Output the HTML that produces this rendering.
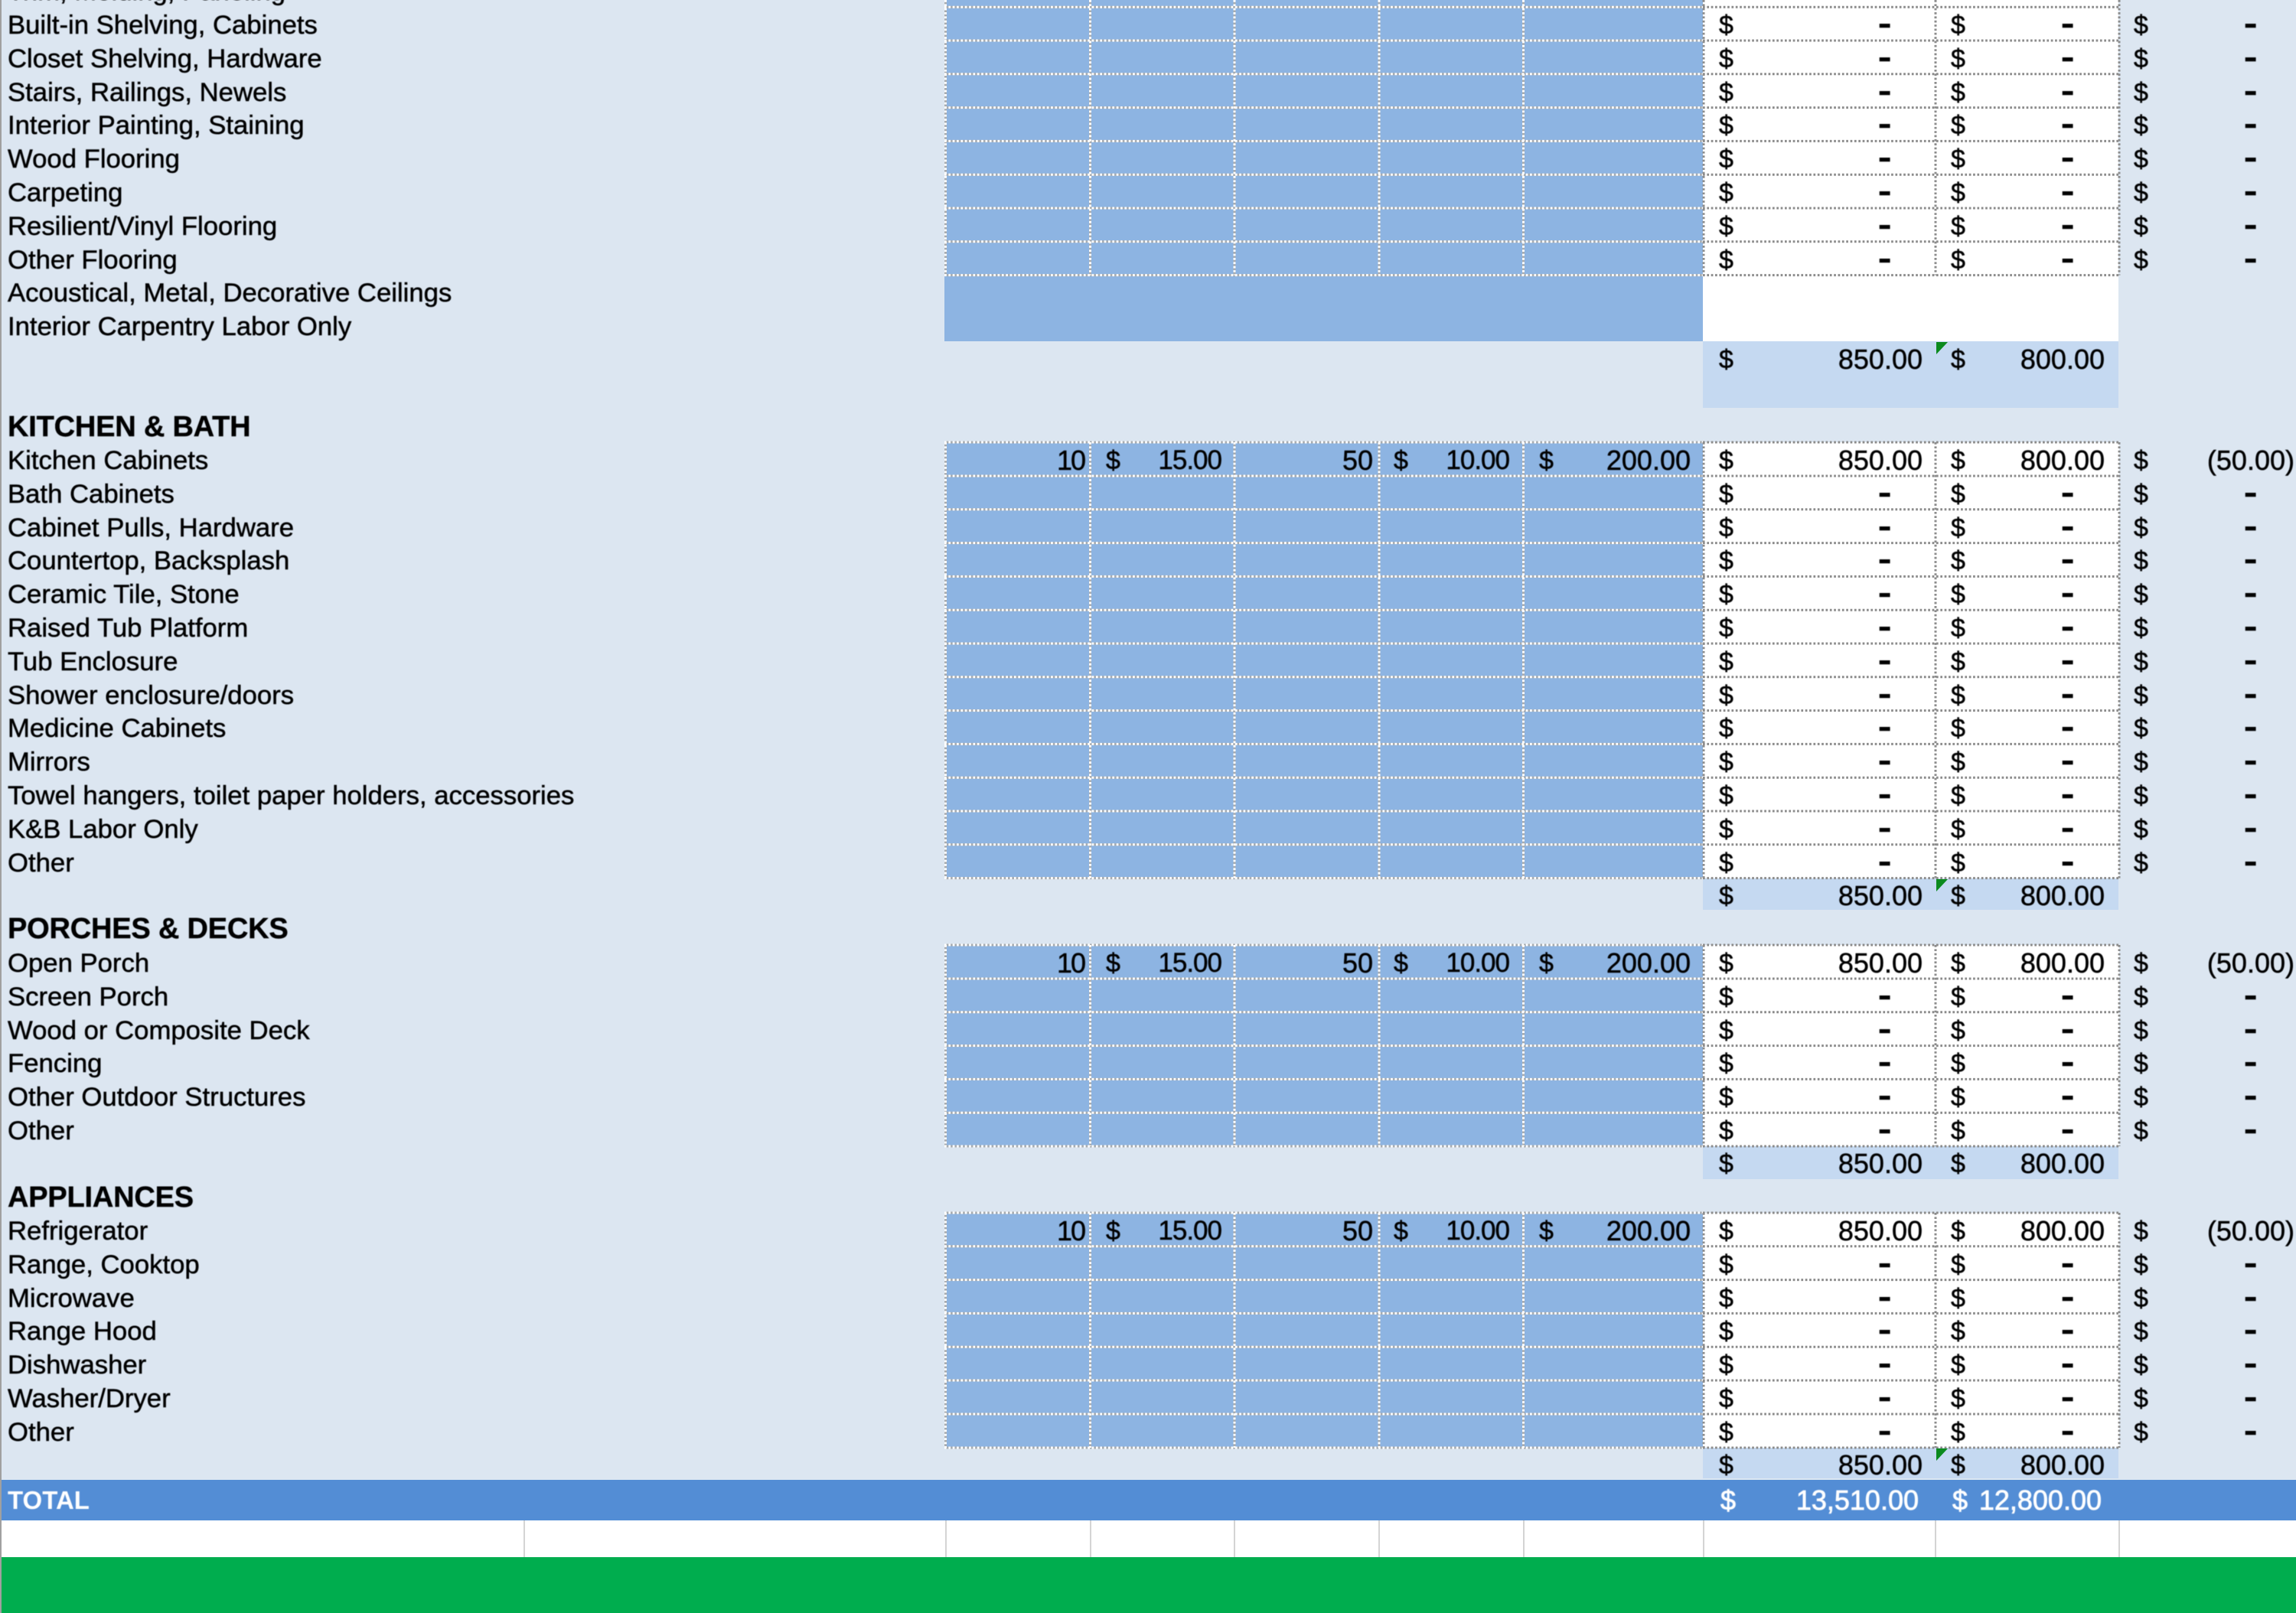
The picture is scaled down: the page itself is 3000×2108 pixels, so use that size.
<!DOCTYPE html>
<html><head><meta charset="utf-8"><style>
html,body{margin:0;padding:0;width:3000px;height:2108px;overflow:hidden;background:#DCE6F1}
body{position:relative;font-family:"Liberation Sans",Arial,sans-serif;font-size:34px;color:#000}
.x{position:absolute}
.r{position:absolute;left:0;width:3000px;height:44px;line-height:44px;filter:blur(.5px);-webkit-text-stroke:.5px #000}
.r span{position:absolute;top:2px;white-space:pre}
.L{left:10px;font-size:34.7px}
.n{font-size:36px}
.A{left:2246px}.B{left:2549px}.C{left:2788px}
.p{left:1445px}.q{left:1821px}.s{left:2011px}
.D,.E,.F{font-weight:bold;font-size:40px;top:0!important;transform:scaleX(1.3)}
.D{left:2456px}.E{left:2695px}.F{left:2934px}
.G{right:488px}.H{right:250px}.I{right:2px}
.a{right:1583px;letter-spacing:-2px}.b{right:1404px;letter-spacing:-1px;font-size:35px}.c{right:1206px}.d{right:1028px;letter-spacing:-1px;font-size:35px}.e{right:791px}
.h{position:absolute;left:10px;font-weight:bold;font-size:38px;line-height:44px;white-space:pre;letter-spacing:-.2px;filter:blur(.5px);-webkit-text-stroke:.4px #000}
.tot{position:absolute;color:#fff;font-size:36px;line-height:53px;white-space:pre;-webkit-text-stroke:.8px #fff;filter:blur(.4px)}
</style></head><body>
<div class="x" style="left:1234px;top:0;width:991px;height:446px;background:#8DB4E2"></div>
<div class="x" style="left:2225px;top:0;width:543px;height:446px;background:#fff"></div>
<div class="x" style="left:2225px;top:446px;width:543px;height:87px;background:#C5D9F1"></div>
<div class="x" style="left:1234px;top:578px;width:991px;height:570px;background:#8DB4E2"></div>
<div class="x" style="left:2225px;top:578px;width:544px;height:570px;background:#fff"></div>
<div class="x" style="left:2225px;top:1148px;width:543px;height:41px;background:#C5D9F1"></div>
<div class="x" style="left:1234px;top:1235px;width:991px;height:263px;background:#8DB4E2"></div>
<div class="x" style="left:2225px;top:1235px;width:544px;height:263px;background:#fff"></div>
<div class="x" style="left:2225px;top:1498px;width:543px;height:43px;background:#C5D9F1"></div>
<div class="x" style="left:1234px;top:1585px;width:991px;height:307px;background:#8DB4E2"></div>
<div class="x" style="left:2225px;top:1585px;width:544px;height:307px;background:#fff"></div>
<div class="x" style="left:2225px;top:1892px;width:543px;height:40px;background:#C5D9F1"></div>

<svg class="x" style="left:0;top:0" width="3000" height="2108" fill="none">
<path stroke="#A8ACB0" stroke-width="3" d="M1234 9.3H2225M1234 53H2225M1234 96.8H2225M1234 140.6H2225M1234 184.4H2225M1234 228.2H2225M1234 272H2225M1234 315.8H2225M1234 359.6H2225M1234 578H2225M1234 622H2225M1234 665.8H2225M1234 709.6H2225M1234 753.4H2225M1234 797.2H2225M1234 841H2225M1234 884.8H2225M1234 928.6H2225M1234 972.4H2225M1234 1016.2H2225M1234 1060H2225M1234 1103.8H2225M1234 1147.6H2225M1234 1235H2225M1234 1279H2225M1234 1322.8H2225M1234 1366.6H2225M1234 1410.4H2225M1234 1454.2H2225M1234 1498H2225M1234 1585H2225M1234 1628.8H2225M1234 1672.6H2225M1234 1716.4H2225M1234 1760.2H2225M1234 1804H2225M1234 1848H2225M1234 1892H2225M1235.5 0V359.6M1424.5 0V359.6M1613 0V359.6M1802 0V359.6M1990.5 0V359.6M1235.5 578V1147.6M1424.5 578V1147.6M1613 578V1147.6M1802 578V1147.6M1990.5 578V1147.6M1235.5 1235V1498M1424.5 1235V1498M1613 1235V1498M1802 1235V1498M1990.5 1235V1498M1235.5 1585V1892M1424.5 1585V1892M1613 1585V1892M1802 1585V1892M1990.5 1585V1892"/>
<path stroke="#fff" stroke-width="3" stroke-dasharray="2.7 2.65" d="M1234 9.3H2225M1234 53H2225M1234 96.8H2225M1234 140.6H2225M1234 184.4H2225M1234 228.2H2225M1234 272H2225M1234 315.8H2225M1234 359.6H2225M1234 578H2225M1234 622H2225M1234 665.8H2225M1234 709.6H2225M1234 753.4H2225M1234 797.2H2225M1234 841H2225M1234 884.8H2225M1234 928.6H2225M1234 972.4H2225M1234 1016.2H2225M1234 1060H2225M1234 1103.8H2225M1234 1147.6H2225M1234 1235H2225M1234 1279H2225M1234 1322.8H2225M1234 1366.6H2225M1234 1410.4H2225M1234 1454.2H2225M1234 1498H2225M1234 1585H2225M1234 1628.8H2225M1234 1672.6H2225M1234 1716.4H2225M1234 1760.2H2225M1234 1804H2225M1234 1848H2225M1234 1892H2225M1235.5 0V359.6M1424.5 0V359.6M1613 0V359.6M1802 0V359.6M1990.5 0V359.6M1235.5 578V1147.6M1424.5 578V1147.6M1613 578V1147.6M1802 578V1147.6M1990.5 578V1147.6M1235.5 1235V1498M1424.5 1235V1498M1613 1235V1498M1802 1235V1498M1990.5 1235V1498M1235.5 1585V1892M1424.5 1585V1892M1613 1585V1892M1802 1585V1892M1990.5 1585V1892"/>
<path stroke="#8C8C8C" stroke-width="3" stroke-dasharray="2.7 2.65" d="M2225 9.3H2769M2225 53H2769M2225 96.8H2769M2225 140.6H2769M2225 184.4H2769M2225 228.2H2769M2225 272H2769M2225 315.8H2769M2225 359.6H2769M2225 578H2769M2225 622H2769M2225 665.8H2769M2225 709.6H2769M2225 753.4H2769M2225 797.2H2769M2225 841H2769M2225 884.8H2769M2225 928.6H2769M2225 972.4H2769M2225 1016.2H2769M2225 1060H2769M2225 1103.8H2769M2225 1147.6H2769M2225 1235H2769M2225 1279H2769M2225 1322.8H2769M2225 1366.6H2769M2225 1410.4H2769M2225 1454.2H2769M2225 1498H2769M2225 1585H2769M2225 1628.8H2769M2225 1672.6H2769M2225 1716.4H2769M2225 1760.2H2769M2225 1804H2769M2225 1848H2769M2225 1892H2769M2226 0V359.6M2529 0V359.6M2769 0V359.6M2226 578V1147.6M2529 578V1147.6M2769 578V1147.6M2226 1235V1498M2529 1235V1498M2769 1235V1498M2226 1585V1892M2529 1585V1892M2769 1585V1892"/>
<path fill="#0B8A1E" d="M2530 447H2545L2530 463ZM2530 1149H2545L2530 1165ZM2530 1893H2545L2530 1909Z"/>
</svg>

<div class="r" style="top:-34.8px"><span class="L">Trim, Molding, Paneling</span></div>
<div class="r" style="top:9px"><span class="L">Built-in Shelving, Cabinets</span><span class="A">$</span><span class="D">-</span><span class="B">$</span><span class="E">-</span><span class="C">$</span><span class="F">-</span></div>
<div class="r" style="top:52.8px"><span class="L">Closet Shelving, Hardware</span><span class="A">$</span><span class="D">-</span><span class="B">$</span><span class="E">-</span><span class="C">$</span><span class="F">-</span></div>
<div class="r" style="top:96.6px"><span class="L">Stairs, Railings, Newels</span><span class="A">$</span><span class="D">-</span><span class="B">$</span><span class="E">-</span><span class="C">$</span><span class="F">-</span></div>
<div class="r" style="top:140.4px"><span class="L">Interior Painting, Staining</span><span class="A">$</span><span class="D">-</span><span class="B">$</span><span class="E">-</span><span class="C">$</span><span class="F">-</span></div>
<div class="r" style="top:184.2px"><span class="L">Wood Flooring</span><span class="A">$</span><span class="D">-</span><span class="B">$</span><span class="E">-</span><span class="C">$</span><span class="F">-</span></div>
<div class="r" style="top:228px"><span class="L">Carpeting</span><span class="A">$</span><span class="D">-</span><span class="B">$</span><span class="E">-</span><span class="C">$</span><span class="F">-</span></div>
<div class="r" style="top:271.8px"><span class="L">Resilient/Vinyl Flooring</span><span class="A">$</span><span class="D">-</span><span class="B">$</span><span class="E">-</span><span class="C">$</span><span class="F">-</span></div>
<div class="r" style="top:315.6px"><span class="L">Other Flooring</span><span class="A">$</span><span class="D">-</span><span class="B">$</span><span class="E">-</span><span class="C">$</span><span class="F">-</span></div>
<div class="r" style="top:359.4px"><span class="L">Acoustical, Metal, Decorative Ceilings</span></div>
<div class="r" style="top:403.2px"><span class="L">Interior Carpentry Labor Only</span></div>
<div class="r" style="top:446px"><span class="A">$</span><span class="G n">850.00</span><span class="B">$</span><span class="H n">800.00</span></div>

<div class="h" style="top:535.5px">KITCHEN &amp; BATH</div>
<div class="r" style="top:578px"><span class="L">Kitchen Cabinets</span><span class="a n">10</span><span class="p">$</span><span class="b n">15.00</span><span class="c n">50</span><span class="q">$</span><span class="d n">10.00</span><span class="s">$</span><span class="e n">200.00</span><span class="A">$</span><span class="G n">850.00</span><span class="B">$</span><span class="H n">800.00</span><span class="C">$</span><span class="I n">(50.00)</span></div>
<div class="r" style="top:621.8px"><span class="L">Bath Cabinets</span><span class="A">$</span><span class="D">-</span><span class="B">$</span><span class="E">-</span><span class="C">$</span><span class="F">-</span></div>
<div class="r" style="top:665.6px"><span class="L">Cabinet Pulls, Hardware</span><span class="A">$</span><span class="D">-</span><span class="B">$</span><span class="E">-</span><span class="C">$</span><span class="F">-</span></div>
<div class="r" style="top:709.4px"><span class="L">Countertop, Backsplash</span><span class="A">$</span><span class="D">-</span><span class="B">$</span><span class="E">-</span><span class="C">$</span><span class="F">-</span></div>
<div class="r" style="top:753.2px"><span class="L">Ceramic Tile, Stone</span><span class="A">$</span><span class="D">-</span><span class="B">$</span><span class="E">-</span><span class="C">$</span><span class="F">-</span></div>
<div class="r" style="top:797px"><span class="L">Raised Tub Platform</span><span class="A">$</span><span class="D">-</span><span class="B">$</span><span class="E">-</span><span class="C">$</span><span class="F">-</span></div>
<div class="r" style="top:840.8px"><span class="L">Tub Enclosure</span><span class="A">$</span><span class="D">-</span><span class="B">$</span><span class="E">-</span><span class="C">$</span><span class="F">-</span></div>
<div class="r" style="top:884.6px"><span class="L">Shower enclosure/doors</span><span class="A">$</span><span class="D">-</span><span class="B">$</span><span class="E">-</span><span class="C">$</span><span class="F">-</span></div>
<div class="r" style="top:928.4px"><span class="L">Medicine Cabinets</span><span class="A">$</span><span class="D">-</span><span class="B">$</span><span class="E">-</span><span class="C">$</span><span class="F">-</span></div>
<div class="r" style="top:972.2px"><span class="L">Mirrors</span><span class="A">$</span><span class="D">-</span><span class="B">$</span><span class="E">-</span><span class="C">$</span><span class="F">-</span></div>
<div class="r" style="top:1016px"><span class="L">Towel hangers, toilet paper holders, accessories</span><span class="A">$</span><span class="D">-</span><span class="B">$</span><span class="E">-</span><span class="C">$</span><span class="F">-</span></div>
<div class="r" style="top:1059.8px"><span class="L">K&amp;B Labor Only</span><span class="A">$</span><span class="D">-</span><span class="B">$</span><span class="E">-</span><span class="C">$</span><span class="F">-</span></div>
<div class="r" style="top:1103.6px"><span class="L">Other</span><span class="A">$</span><span class="D">-</span><span class="B">$</span><span class="E">-</span><span class="C">$</span><span class="F">-</span></div>
<div class="r" style="top:1147px"><span class="A">$</span><span class="G n">850.00</span><span class="B">$</span><span class="H n">800.00</span></div>

<div class="h" style="top:1192px">PORCHES &amp; DECKS</div>
<div class="r" style="top:1235px"><span class="L">Open Porch</span><span class="a n">10</span><span class="p">$</span><span class="b n">15.00</span><span class="c n">50</span><span class="q">$</span><span class="d n">10.00</span><span class="s">$</span><span class="e n">200.00</span><span class="A">$</span><span class="G n">850.00</span><span class="B">$</span><span class="H n">800.00</span><span class="C">$</span><span class="I n">(50.00)</span></div>
<div class="r" style="top:1278.8px"><span class="L">Screen Porch</span><span class="A">$</span><span class="D">-</span><span class="B">$</span><span class="E">-</span><span class="C">$</span><span class="F">-</span></div>
<div class="r" style="top:1322.6px"><span class="L">Wood or Composite Deck</span><span class="A">$</span><span class="D">-</span><span class="B">$</span><span class="E">-</span><span class="C">$</span><span class="F">-</span></div>
<div class="r" style="top:1366.4px"><span class="L">Fencing</span><span class="A">$</span><span class="D">-</span><span class="B">$</span><span class="E">-</span><span class="C">$</span><span class="F">-</span></div>
<div class="r" style="top:1410.2px"><span class="L">Other Outdoor Structures</span><span class="A">$</span><span class="D">-</span><span class="B">$</span><span class="E">-</span><span class="C">$</span><span class="F">-</span></div>
<div class="r" style="top:1454px"><span class="L">Other</span><span class="A">$</span><span class="D">-</span><span class="B">$</span><span class="E">-</span><span class="C">$</span><span class="F">-</span></div>
<div class="r" style="top:1496.5px"><span class="A">$</span><span class="G n">850.00</span><span class="B">$</span><span class="H n">800.00</span></div>

<div class="h" style="top:1542.5px">APPLIANCES</div>
<div class="r" style="top:1585px"><span class="L">Refrigerator</span><span class="a n">10</span><span class="p">$</span><span class="b n">15.00</span><span class="c n">50</span><span class="q">$</span><span class="d n">10.00</span><span class="s">$</span><span class="e n">200.00</span><span class="A">$</span><span class="G n">850.00</span><span class="B">$</span><span class="H n">800.00</span><span class="C">$</span><span class="I n">(50.00)</span></div>
<div class="r" style="top:1628.8px"><span class="L">Range, Cooktop</span><span class="A">$</span><span class="D">-</span><span class="B">$</span><span class="E">-</span><span class="C">$</span><span class="F">-</span></div>
<div class="r" style="top:1672.6px"><span class="L">Microwave</span><span class="A">$</span><span class="D">-</span><span class="B">$</span><span class="E">-</span><span class="C">$</span><span class="F">-</span></div>
<div class="r" style="top:1716.4px"><span class="L">Range Hood</span><span class="A">$</span><span class="D">-</span><span class="B">$</span><span class="E">-</span><span class="C">$</span><span class="F">-</span></div>
<div class="r" style="top:1760.2px"><span class="L">Dishwasher</span><span class="A">$</span><span class="D">-</span><span class="B">$</span><span class="E">-</span><span class="C">$</span><span class="F">-</span></div>
<div class="r" style="top:1804px"><span class="L">Washer/Dryer</span><span class="A">$</span><span class="D">-</span><span class="B">$</span><span class="E">-</span><span class="C">$</span><span class="F">-</span></div>
<div class="r" style="top:1847.8px"><span class="L">Other</span><span class="A">$</span><span class="D">-</span><span class="B">$</span><span class="E">-</span><span class="C">$</span><span class="F">-</span></div>
<div class="r" style="top:1891px"><span class="A">$</span><span class="G n">850.00</span><span class="B">$</span><span class="H n">800.00</span></div>

<div class="x" style="left:0;top:1934px;width:3000px;height:53px;background:#538DD5"></div>
<div class="tot" style="left:10px;top:1934px;font-size:33px;font-weight:bold;-webkit-text-stroke:0">TOTAL</div>
<div class="tot" style="left:2248px;top:1934px">$</div>
<div class="tot" style="right:493px;top:1934px">13,510.00</div>
<div class="tot" style="left:2551px;top:1934px">$</div>
<div class="tot" style="right:254px;top:1934px">12,800.00</div>

<div class="x" style="left:0;top:1987px;width:3000px;height:48px;background:#fff"></div>
<div class="x" style="left:684px;top:1987px;width:2px;height:48px;background:#D4D4D4"></div>
<div class="x" style="left:1235px;top:1987px;width:2px;height:48px;background:#D4D4D4"></div>
<div class="x" style="left:1424px;top:1987px;width:2px;height:48px;background:#D4D4D4"></div>
<div class="x" style="left:1612px;top:1987px;width:2px;height:48px;background:#D4D4D4"></div>
<div class="x" style="left:1801px;top:1987px;width:2px;height:48px;background:#D4D4D4"></div>
<div class="x" style="left:1990px;top:1987px;width:2px;height:48px;background:#D4D4D4"></div>
<div class="x" style="left:2225px;top:1987px;width:2px;height:48px;background:#D4D4D4"></div>
<div class="x" style="left:2528px;top:1987px;width:2px;height:48px;background:#D4D4D4"></div>
<div class="x" style="left:2768px;top:1987px;width:2px;height:48px;background:#D4D4D4"></div>
<div class="x" style="left:0;top:2035px;width:3000px;height:73px;background:#00AD4E"></div>
<div class="x" style="left:0;top:0;width:2px;height:2108px;background:#A0A0A0"></div>
</body></html>
